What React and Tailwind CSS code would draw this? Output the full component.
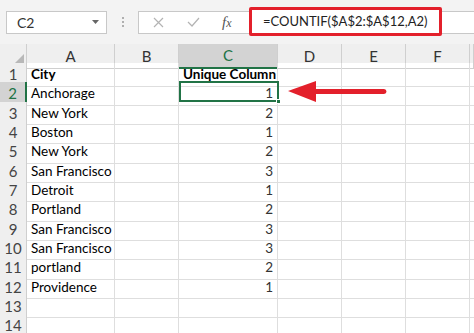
const gridCols = 'grid grid-cols-[27px_88px_64px_99px_64px_64px_64px_1fr]';

const colKeys = ['A', 'B', 'C', 'D', 'E', 'F', ''];

const rows = [
  ['City', '', 'Unique Column'],
  ['Anchorage', '', '1'],
  ['New York', '', '2'],
  ['Boston', '', '1'],
  ['New York', '', '2'],
  ['San Francisco', '', '3'],
  ['Detroit', '', '1'],
  ['Portland', '', '2'],
  ['San Francisco', '', '3'],
  ['San Francisco', '', '3'],
  ['portland', '', '2'],
  ['Providence', '', '1'],
  ['', '', ''],
  ['', '', ''],
];

function Toolbar() {
  return (
    <div className="relative flex h-[44px] items-center bg-[#f3f3f3] pl-[6px]">
      <div className="flex h-[23px] w-[101px] shrink-0 items-center justify-between border border-[#c8c8c8] bg-white pl-[10px] pr-[7px] text-[14px] text-[#333]">
        <span>C2</span>
        <svg width="7" height="4" viewBox="0 0 7 4"><path d="M0 0h7L3.5 4z" fill="#666" /></svg>
      </div>
      <div className="flex w-[31px] shrink-0 flex-col items-center gap-[2px]">
        <span className="h-[2px] w-[2px] rounded-full bg-[#999]" />
        <span className="h-[2px] w-[2px] rounded-full bg-[#999]" />
        <span className="h-[2px] w-[2px] rounded-full bg-[#999]" />
      </div>
      <div className="flex h-[23px] flex-1 items-center border border-r-0 border-[#c8c8c8] bg-white">
        <svg className="ml-[14px]" width="11" height="11" viewBox="0 0 11 11"><path d="M1 1l9 9M10 1l-9 9" stroke="#b3b3b3" strokeWidth="1.2" /></svg>
        <svg className="ml-[23px]" width="13" height="10" viewBox="0 0 13 10"><path d="M1 5l4 4 7-8" stroke="#b3b3b3" strokeWidth="1.2" fill="none" /></svg>
        <span className="ml-[22px] font-['Liberation_Serif',serif] text-[15px] italic text-[#555]">f<span className="text-[12px]">x</span></span>
      </div>
      <div className="absolute left-[249px] top-[7px] flex h-[29px] w-[193px] items-center rounded-[2px] border-[3px] border-[#e3202b] bg-white pl-[11px] text-[13px] text-[#222]">
        =COUNTIF($A$2:$A$12,A2)
      </div>
    </div>
  );
}

function HeaderRow() {
  return (
    <div className={`${gridCols} h-[19px] bg-[#efefef]`}>
      <div className="relative border-r border-b border-[#cfcfcf]">
        <svg className="absolute bottom-[3px] right-[2px]" width="11" height="11" viewBox="0 0 11 11"><path d="M11 0v11H0z" fill="#b8b8b8" /></svg>
      </div>
      {colKeys.map((k, j) => (
        <div
          key={j}
          className={`flex items-center justify-center border-r text-[15px] ${
            k === 'C'
              ? 'border-b-2 border-r-[#cfcfcf] border-b-[#217346] bg-[#d3d3d3] text-[#217346]'
              : 'border-b border-[#cfcfcf] text-[#333]'
          }`}
        >
          {k}
        </div>
      ))}
    </div>
  );
}

export default function App() {
  return (
    <div className="h-[333px] w-[474px] overflow-hidden bg-white font-['Lato',sans-serif]">
      <Toolbar />
      <HeaderRow />
      <div className="relative">
        {rows.map((r, i) => (
          <div key={i} className={`${gridCols} h-[19.33px]`}>
            <div
              className={`flex items-center justify-center text-[15px] ${
                i === 1
                  ? 'border-r-2 border-b border-r-[#217346] border-b-[#cfcfcf] bg-[#d3d3d3] text-[#217346]'
                  : 'border-r border-b border-[#cfcfcf] bg-[#efefef] text-[#444]'
              }`}
            >
              {i + 1}
            </div>
            {colKeys.map((k, j) => (
              <div
                key={j}
                className={`flex items-center whitespace-nowrap border-r border-b border-[#dedede] text-[13.5px] ${
                  j === 2 && i > 0 ? 'justify-end pr-[4px] text-[#333]' : 'pl-[4px] text-black'
                } ${i === 0 ? 'font-bold' : ''}`}
              >
                {r[j] || ''}
              </div>
            ))}
          </div>
        ))}
        <div className="pointer-events-none absolute left-[179px] top-[18px] h-[21px] w-[100px] border-2 border-[#217346]">
          <span className="absolute -bottom-[4px] -right-[4px] h-[5px] w-[5px] border border-white bg-[#217346]" />
        </div>
        <svg className="absolute left-[286px] top-[17px]" width="104" height="24" viewBox="0 0 104 24">
          <path d="M2 11L30 1v8h68a2.5 2.5 0 0 1 0 5H30v8z" fill="#e3202b" />
        </svg>
      </div>
    </div>
  );
}
